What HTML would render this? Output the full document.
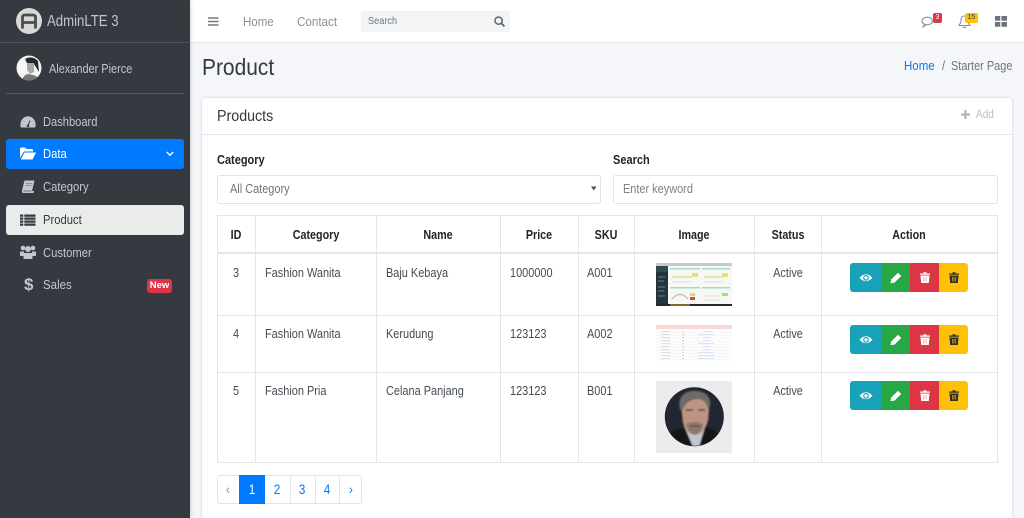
<!DOCTYPE html>
<html><head><meta charset="utf-8"><title>AdminLTE 3</title>
<style>
html,body{margin:0;padding:0;width:1024px;height:518px;overflow:hidden;background:#f4f6f9;font-family:"Liberation Sans",sans-serif}
#root{position:absolute;left:0;top:0;width:1024px;height:518px;overflow:hidden;background:#f4f6f9;filter:blur(.3px)}
.a{position:absolute;box-sizing:border-box}
.t{position:absolute;white-space:nowrap;line-height:20px;height:20px;font-size:12.5px;transform:scaleX(.875);transform-origin:0 50%;color:#454c53}
.c{transform:translateX(-50%) scaleX(.875);transform-origin:50% 50%}
.b{font-weight:700;color:#212529;transform-origin:0 50%}
.c.b{transform:translateX(-50%) scaleX(.86);transform-origin:50% 50%}
.n{color:#c2c7d0}
.l{background:#e4e7ea;position:absolute}
svg{position:absolute;display:block}
.btns{background:linear-gradient(90deg,#17a2b8 0 31px,#28a745 31px 60px,#dc3545 60px 89px,#ffc107 89px);border-radius:3px;width:118px;height:29px;left:850px}
.pg{font-size:13.5px}
</style></head><body>
<div id="root">

<svg width="0" height="0" style="left:0;top:0"><defs><symbol id="ic" viewBox="0 0 118 29">
<path d="M9.500 14.800Q16 7.800 22.500 14.800Q16 21.800 9.500 14.800Z" fill="#fff"/><circle cx="16" cy="14.800" r="2.900" fill="#17a2b8"/><circle cx="16" cy="14.800" r="1.700" fill="#fff"/>
<path d="M40.500 20.300L41.200 16.500 48 9.700 51.300 13 44.500 19.600Z" fill="#fff"/>
<path d="M70.500 12.500H79.500L78.800 20H71.200ZM70 10.500H80V11.700H70ZM73.500 9.300H76.500V10.500H73.500Z" fill="#fff"/><path d="M73.300 14V18.500M75 14V18.500M76.700 14V18.500" stroke="#f0a0a8" stroke-width=".6"/>
<path d="M99.500 12.500H108.500L107.800 20H100.200ZM99 10.500H109V11.700H99ZM102.500 9.300H105.500V10.500H102.500Z" fill="#33302a"/><path d="M102.300 14V18.500M104 14V18.500M105.700 14V18.500" stroke="#ffc107" stroke-width=".6"/>
</symbol></defs></svg>

<!-- content -->
<div class="a" style="left:190px;top:0;width:834px;height:43px;background:#fff;border-bottom:1px solid #e6e8eb"></div>
<div class="t" style="left:202px;top:57px;font-size:23px;transform:scaleX(.91);color:#343a40">Product</div>
<div class="t" style="left:904px;top:56px;color:#007bff;transform:scaleX(.92)">Home</div>
<div class="t" style="left:941.500px;top:56px;color:#6c757d">/</div>
<div class="t" style="left:951px;top:56px;color:#6c757d">Starter Page</div>

<!-- navbar -->
<svg style="left:208px;top:17px" width="11" height="9"><path d="M0 1h10.500M0 4.500h10.500M0 8h10.500" stroke="#777" stroke-width="1.600"/></svg>
<div class="t" style="left:243px;top:12px;color:#8a9097;transform:scaleX(.92)">Home</div>
<div class="t" style="left:297px;top:12px;color:#8a9097;transform:scaleX(.93)">Contact</div>
<div class="a" style="left:361px;top:11px;width:149px;height:21px;background:#f2f4f6;border-radius:2px"></div>
<div class="t" style="left:368px;top:11px;font-size:10.500px;color:#6c757d">Search</div>
<svg style="left:494px;top:16px" width="11" height="11"><circle cx="4.600" cy="4.600" r="3.600" fill="none" stroke="#5f666d" stroke-width="1.500"/><path d="M7.300 7.300L10.400 10.400" stroke="#5f666d" stroke-width="1.800"/></svg>

<svg style="left:921px;top:15px" width="14" height="13"><ellipse cx="6.200" cy="6" rx="5.200" ry="3.800" fill="none" stroke="#8a9097" stroke-width="1.100"/><path d="M3 9.500L2 12l3.500-2" fill="none" stroke="#8a9097"/></svg>
<div class="a" style="left:933px;top:13px;width:9px;height:10px;background:#dc3545;border-radius:2px"></div>
<div class="t" style="left:935.500px;top:8px;font-size:7px;color:#fff;transform:none">3</div>
<svg style="left:958px;top:15px" width="13" height="14"><path d="M6.500 1C4 1 3 3 3 5.500C3 8 2 9 1 10.500H12C11 9 10 8 10 5.500C10 3 9 1 6.500 1ZM5 11.500C5.300 13 7.700 13 8 11.500" fill="none" stroke="#8a9097" stroke-width="1.100"/></svg>
<div class="a" style="left:965px;top:13px;width:13px;height:10px;background:#ffc107;border-radius:2px"></div>
<div class="t" style="left:967.500px;top:8px;font-size:7px;color:#343a40;transform:none">15</div>
<svg style="left:995px;top:16px" width="12" height="11"><path d="M0 0h5.300v4.800H0zM6.500 0H12v4.800H6.500zM0 6h5.300v4.800H0zM6.500 6H12v4.800H6.500z" fill="#6c757d"/></svg>

<!-- sidebar -->
<div class="a" style="left:0;top:0;width:190px;height:518px;background:#343a40;box-shadow:1px 0 4px rgba(0,0,0,.15)"></div>
<div class="a" style="left:0;top:42px;width:190px;height:1px;background:#4b545c"></div>
<div class="a" style="left:6px;top:93px;width:178px;height:1px;background:#4f5962"></div>
<svg style="left:16px;top:8px" width="26" height="26"><circle cx="13" cy="13" r="13" fill="#d8d8d6"/><path d="M6.500 20.500V9.500Q6.500 7 9 7H17Q19.500 7 19.500 9.500V20.500M6.500 14.500H19.500" fill="none" stroke="#4a4c50" stroke-width="2.800"/></svg>
<div class="t" style="left:47px;top:12px;font-size:15.500px;transform:scaleX(.85);color:#c4c8cc">AdminLTE 3</div>
<svg style="left:16px;top:55px" width="26" height="26"><defs><clipPath id="u"><circle cx="13" cy="13" r="12.500"/></clipPath></defs><circle cx="13" cy="13" r="12.500" fill="#f6f6f6"/><g clip-path="url(#u)"><path d="M9 4Q16 0 22 6L23 17 18 9 11 8Z" fill="#26282a"/><path d="M11 8H18L18 17 14 19 11 15Z" fill="#a8a8a8"/><path d="M6 26Q7 20 12 19L17 20Q22 21 24 26Z" fill="#777"/></g></svg>
<div class="t n" style="left:49px;top:59px">Alexander Pierce</div>

<svg style="left:20px;top:115px" width="16" height="13"><path d="M0.800 12.500Q-.8 6 4 2.500Q8 0 12 2.500Q16.800 6 15.200 12.500Z" fill="#c2c7d0"/><path d="M8 11L10 5.500" stroke="#343a40" stroke-width="1"/><circle cx="8" cy="10.800" r="1.300" fill="#343a40"/><path d="M3 9.500v.1M4 6v.1M8 3.500v.1M13 9.500v.1M12 6v.1" stroke="#343a40" stroke-width="1.400"/></svg>
<div class="t n" style="left:43px;top:112px;transform:scaleX(.89)">Dashboard</div>

<div class="a" style="left:6px;top:139px;width:178px;height:30px;background:#007bff;border-radius:3px"></div>
<svg style="left:20px;top:147px" width="16" height="13"><path d="M0 2Q0 .5 1.500 .5H5L6.500 2H11.500Q13 2 13 3.500V4.500H4L0 11Z" fill="#fff"/><path d="M4.500 5.500H16L12.500 12.500H0.800Z" fill="#fff"/></svg>
<div class="t" style="left:43px;top:144px;color:#fff;transform:scaleX(.9)">Data</div>
<svg style="left:166px;top:151px" width="8" height="6"><path d="M.8 1L4 4.200 7.200 1" fill="none" stroke="#fff" stroke-width="1.400"/></svg>

<svg style="left:21px;top:180px" width="14" height="14"><path d="M3.500 .5H13.500L11 11H13L12.500 13H2.500Q.5 13 1 10.500Z" fill="#c2c7d0"/><path d="M5 3.500H11M4.500 5.500H10.500" stroke="#8b9096" stroke-width=".9"/><path d="M2.500 11H10.500" stroke="#5a6066" stroke-width=".8"/></svg>
<div class="t n" style="left:43px;top:177px;transform:scaleX(.9)">Category</div>

<div class="a" style="left:6px;top:205px;width:178px;height:30px;background:#e9ecea;border-radius:3px"></div>
<svg style="left:20px;top:214px" width="16" height="12"><path d="M0 .5h3.300v2.200H0zM4.300 .5H15.500v2.200H4.300zM0 3.500h3.300v2.200H0zM4.300 3.500H15.500v2.200H4.300zM0 6.500h3.300v2.200H0zM4.300 6.500H15.500v2.200H4.300zM0 9.500h3.300v2.200H0zM4.300 9.500H15.500v2.200H4.300z" fill="#343a40"/></svg>
<div class="t" style="left:43px;top:210px;color:#343a40;transform:scaleX(.9)">Product</div>

<svg style="left:20px;top:245px" width="16" height="15"><circle cx="3" cy="3" r="2.300" fill="#c2c7d0"/><circle cx="13" cy="3" r="2.300" fill="#c2c7d0"/><circle cx="8" cy="4" r="3" fill="#c2c7d0"/><path d="M0 6.500H4V11H0zM12 6.500H16V11H12zM3.500 8H12.500V14H3.500z" fill="#c2c7d0"/></svg>
<div class="t n" style="left:43px;top:243px;transform:scaleX(.9)">Customer</div>

<div class="t" style="left:24px;top:275px;font-size:17px;font-weight:700;color:#c2c7d0;transform:none">$</div>
<div class="t n" style="left:43px;top:275px;transform:scaleX(.92)">Sales</div>
<div class="a" style="left:147px;top:279px;width:25px;height:14px;background:#dc3545;border-radius:3px"></div>
<div class="t" style="left:159.500px;top:276px;font-size:9.500px;font-weight:700;color:#fff;transform:translateX(-50%)">New</div>

<!-- card -->
<div class="a" style="left:202px;top:98px;width:810px;height:420px;background:#fff;border-radius:3px 3px 0 0;box-shadow:0 0 2px rgba(0,0,0,.2)"></div>
<div class="a" style="left:202px;top:134px;width:810px;height:1px;background:#e6e8eb"></div>
<div class="t" style="left:217px;top:107px;font-size:15.500px;transform:scaleX(.92);color:#343a40">Products</div>
<svg style="left:961px;top:110px" width="9" height="9"><path d="M4.500 0v9M0 4.500h9" stroke="#adb5bd" stroke-width="2.200"/></svg>
<div class="t" style="left:976px;top:105px;font-size:11.500px;color:#b8bec4">Add</div>

<!-- filters -->
<div class="t b" style="left:217px;top:150px;transform:scaleX(.88)">Category</div>
<div class="t b" style="left:613px;top:150px;transform:scaleX(.88)">Search</div>
<div class="a" style="left:217px;top:175px;width:384px;height:29px;border:1px solid #dfe3e7;border-radius:3px;background:#fff"></div>
<div class="t" style="left:230px;top:179px;color:#6c757d">All Category</div>
<svg style="left:590.500px;top:186px" width="6" height="5"><path d="M0 .5H5.500L2.750 4.500Z" fill="#495057"/></svg>
<div class="a" style="left:613px;top:175px;width:384.500px;height:29px;border:1px solid #dfe3e7;border-radius:3px;background:#fff"></div>
<div class="t" style="left:623px;top:179px;color:#7b838a">Enter keyword</div>

<!-- table lines -->
<div class="a" style="left:217px;top:215px;width:780.500px;height:248px;border:1px solid #e4e7ea"></div>
<div class="l" style="left:217px;top:252px;width:780px;height:2px"></div>
<div class="l" style="left:217px;top:315px;width:780px;height:1px"></div>
<div class="l" style="left:217px;top:372px;width:780px;height:1px"></div>
<div class="l" style="left:255px;top:215px;width:1px;height:248px"></div>
<div class="l" style="left:376px;top:215px;width:1px;height:248px"></div>
<div class="l" style="left:500px;top:215px;width:1px;height:248px"></div>
<div class="l" style="left:578px;top:215px;width:1px;height:248px"></div>
<div class="l" style="left:634px;top:215px;width:1px;height:248px"></div>
<div class="l" style="left:754px;top:215px;width:1px;height:248px"></div>
<div class="l" style="left:821px;top:215px;width:1px;height:248px"></div>

<div class="t c b" style="left:236px;top:225px">ID</div>
<div class="t c b" style="left:316px;top:225px">Category</div>
<div class="t c b" style="left:438px;top:225px">Name</div>
<div class="t c b" style="left:539px;top:225px">Price</div>
<div class="t c b" style="left:606px;top:225px">SKU</div>
<div class="t c b" style="left:693.500px;top:225px">Image</div>
<div class="t c b" style="left:787.500px;top:225px">Status</div>
<div class="t c b" style="left:909px;top:225px">Action</div>

<!-- row 1 -->
<div class="t c" style="left:236px;top:263px">3</div>
<div class="t" style="left:265px;top:263px">Fashion Wanita</div>
<div class="t" style="left:386px;top:263px">Baju Kebaya</div>
<div class="t" style="left:510px;top:263px">1000000</div>
<div class="t" style="left:587px;top:263px">A001</div>
<div class="t c" style="left:787.500px;top:263px">Active</div>
<!-- row 2 -->
<div class="t c" style="left:236px;top:324px">4</div>
<div class="t" style="left:265px;top:324px">Fashion Wanita</div>
<div class="t" style="left:386px;top:324px">Kerudung</div>
<div class="t" style="left:510px;top:324px">123123</div>
<div class="t" style="left:587px;top:324px">A002</div>
<div class="t c" style="left:787.500px;top:324px">Active</div>
<!-- row 3 -->
<div class="t c" style="left:236px;top:381px">5</div>
<div class="t" style="left:265px;top:381px">Fashion Pria</div>
<div class="t" style="left:386px;top:381px">Celana Panjang</div>
<div class="t" style="left:510px;top:381px">123123</div>
<div class="t" style="left:587px;top:381px">B001</div>
<div class="t c" style="left:787.500px;top:381px">Active</div>

<!-- thumbnails -->
<svg style="left:656px;top:263px" width="76" height="43">
<rect width="76" height="43" fill="#f6f8f6"/><rect width="76" height="3" fill="#c9cbc9"/>
<rect y="3" width="12" height="38" fill="#24343c"/><rect y="3" x="0" width="12" height="6" fill="#2f4a50"/>
<path d="M2 14h7M2 18h6M2 24h7M2 28h6M2 33h7" stroke="#6a7f85"/>
<rect x="14" y="5" width="30" height="1.500" fill="#a8dcc0"/><rect x="46" y="5" width="28" height="1.500" fill="#a8dcc0"/>
<rect x="14" y="24" width="30" height="1.500" fill="#a8dcc0"/><rect x="46" y="24" width="28" height="1.500" fill="#a8dcc0"/>
<path d="M16 14H36M48 14H66" stroke="#c8d870"/><path d="M16 19H36M48 19H66" stroke="#dde2dd"/>
<rect x="36" y="10" width="6" height="4" fill="#e8e070"/><rect x="66" y="10" width="6" height="4" fill="#e8e070"/>
<path d="M16 36Q24 27 32 36" fill="none" stroke="#c8c8a8" stroke-width="1.500"/><rect x="34" y="30" width="5" height="3" fill="#e6d85a"/><rect x="34" y="34" width="5" height="3" fill="#d24a4a"/>
<rect x="66" y="30" width="6" height="3" fill="#a8e070"/><path d="M48 33H64M48 37H64" stroke="#dde2dd"/>
<rect y="41" width="76" height="2" fill="#23282c"/><rect x="14" y="41" width="20" height="2" fill="#7a6a30"/>
</svg>
<svg style="left:656px;top:325px" width="76" height="37">
<rect width="76" height="37" fill="#fdfdfd"/><rect width="76" height="4" fill="#f7d7d8"/>
<path d="M0 7.500H76M0 10.500H76M0 13.500H76M0 16.500H76M0 19.500H76M0 22.500H76M0 25.500H76M0 28.500H76M0 31.500H76M0 34.500H76" stroke="#f6f6f6"/>
<path d="M5 6.500h9M5 9.500h9M5 12.500h9M5 15.500h9M5 18.500h9M5 21.500h9M5 24.500h9M5 27.500h9M5 30.500h9M5 33.500h9" stroke="#dcdee0"/>
<path d="M26 6.500h2M26 9.500h2M26 12.500h2M26 15.500h2M26 18.500h2M26 21.500h2M26 24.500h2M26 27.500h2M26 30.500h2M26 33.500h2" stroke="#f6c4c4"/>
<path d="M47 6.500h8M42 9.500h16M47 12.500h8M47 15.500h8M42 18.500h16M47 21.500h8M47 24.500h8M42 27.500h16M42 30.500h16M42 33.500h16" stroke="#d6e6f6"/>
</svg>
<svg style="left:656px;top:381px" width="76" height="72">
<rect width="76" height="72" fill="#ececec"/>
<defs><clipPath id="h"><circle cx="38.300" cy="35.700" r="29"/></clipPath><filter id="bf"><feGaussianBlur stdDeviation=".7"/></filter></defs>
<circle cx="38.300" cy="35.700" r="29.500" fill="#1d1f27"/>
<g clip-path="url(#h)"><g filter="url(#bf)">
<rect x="8" y="6" width="60" height="60" fill="#232733"/>
<path d="M8 66Q10 50 27 47L38 58 50 46Q66 50 69 66Z" fill="#121317"/>
<path d="M29 47L37 66H43L49 46Z" fill="#c4c6cf"/>
<path d="M25 22Q26 14 38 14Q51 14 53 24L52 38Q49 53 39 54Q29 53 27 40Z" fill="#bd9483"/>
<path d="M24 28Q21 11 38 10Q55 10 54 25L52 28Q50 18 41 18Q30 19 26 30Z" fill="#6d6a68"/>
<path d="M30 29h7M42 29h7" stroke="#4a3a34" stroke-width="1.500"/>
<path d="M30 43Q39 39 47 43Q46 52 39 54Q32 52 30 43Z" fill="#8d776c"/>
<path d="M34 45H44" stroke="#4d3c36" stroke-width="1.200"/>
</g></g></svg>

<!-- buttons -->
<div class="a btns" style="top:263px"></div>
<div class="a btns" style="top:325px"></div>
<div class="a btns" style="top:381px"></div>
<svg style="left:850px;top:263px" width="118" height="29"><use href="#ic"/></svg>
<svg style="left:850px;top:325px" width="118" height="29"><use href="#ic"/></svg>
<svg style="left:850px;top:381px" width="118" height="29"><use href="#ic"/></svg>

<!-- pagination -->
<div class="a" style="left:217px;top:475px;width:145px;height:29px;border:1px solid #e1e4e8;border-radius:3px;background:#fff"></div>
<div class="a" style="left:239px;top:475px;width:26px;height:29px;background:#007bff"></div>
<div class="l" style="left:290px;top:475px;width:1px;height:29px"></div>
<div class="l" style="left:315px;top:475px;width:1px;height:29px"></div>
<div class="l" style="left:339px;top:475px;width:1px;height:29px"></div>
<div class="t c pg" style="left:228px;top:480px;color:#8a9097">‹</div>
<div class="t c pg" style="left:252px;top:480px;color:#fff">1</div>
<div class="t c pg" style="left:276.700px;top:480px;color:#007bff">2</div>
<div class="t c pg" style="left:301.700px;top:480px;color:#007bff">3</div>
<div class="t c pg" style="left:326.700px;top:480px;color:#007bff">4</div>
<div class="t c pg" style="left:350.700px;top:480px;color:#007bff">›</div>
</div>
</body></html>
